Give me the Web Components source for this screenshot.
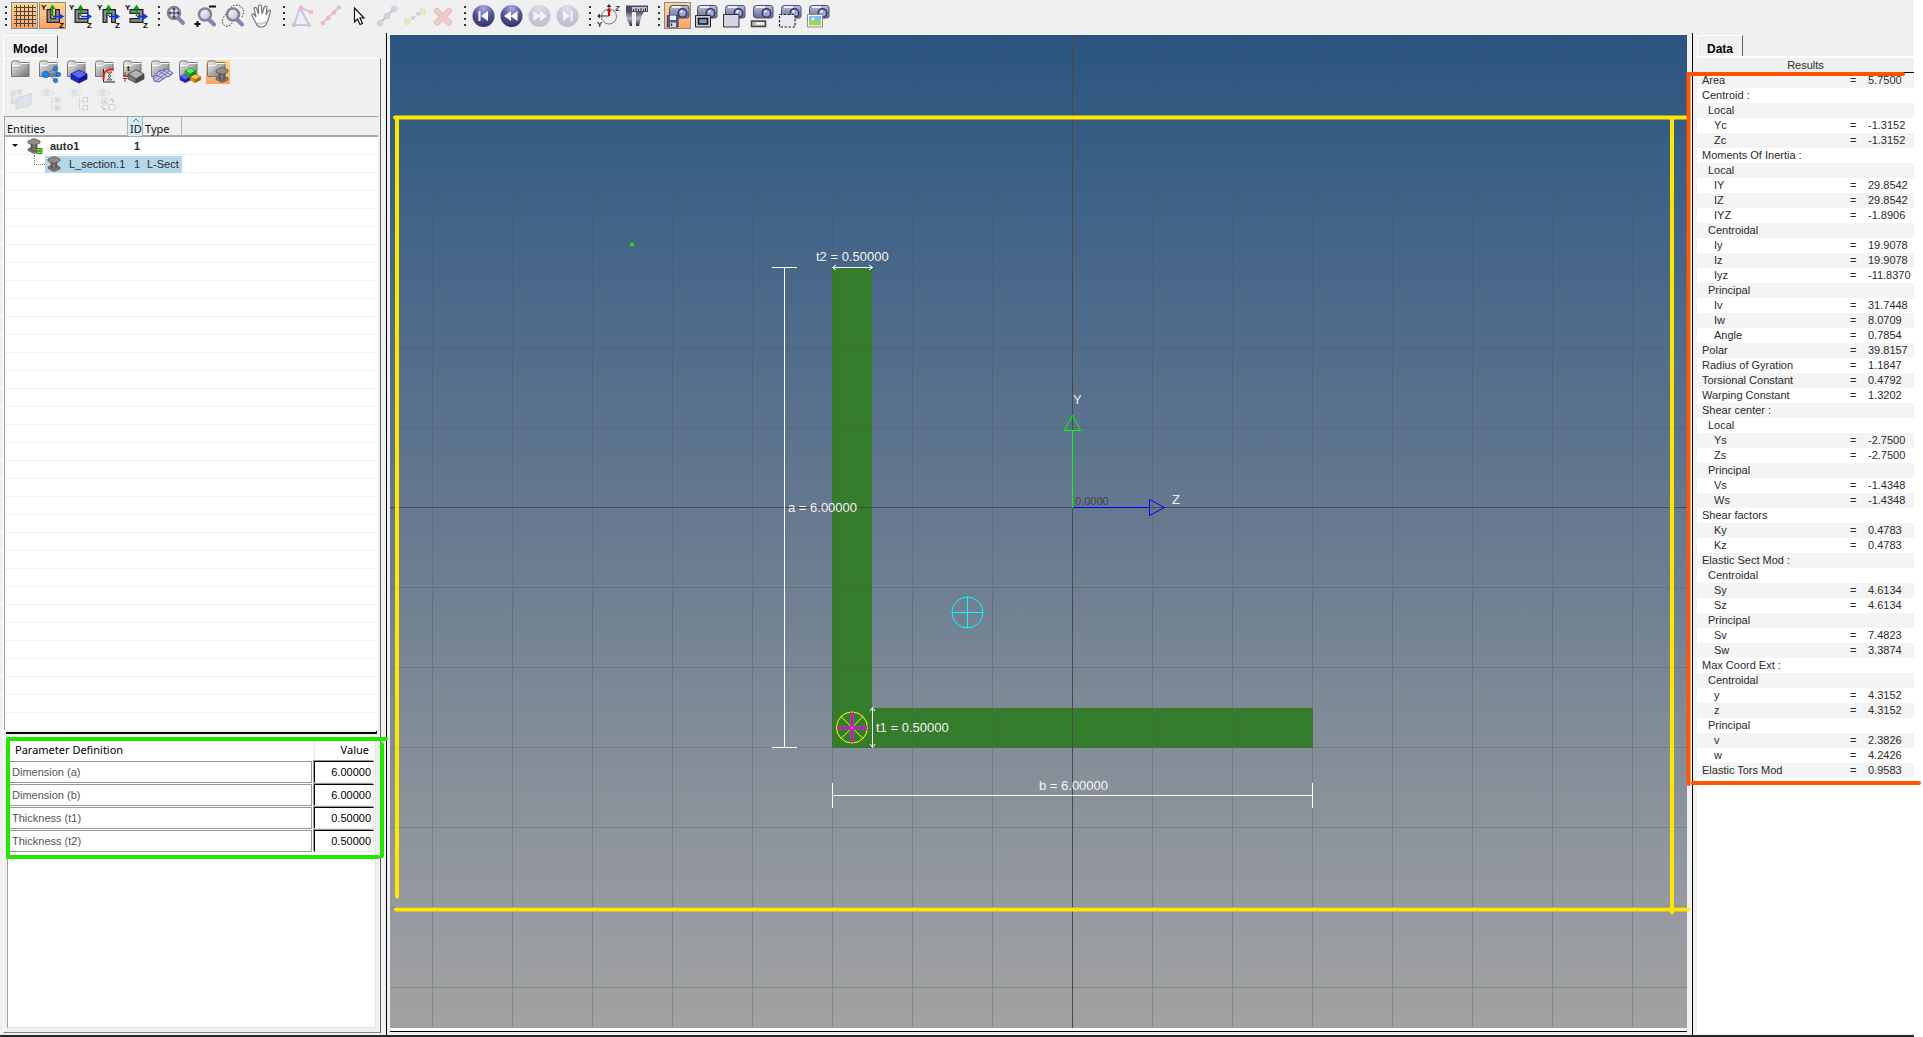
<!DOCTYPE html>
<html lang="en">
<head>
<meta charset="utf-8">
<title>Section editor</title>
<style>
html, body { height: 100%; }
body { margin: 0; background: #fff; font-family: "Liberation Sans", Arial, sans-serif; font-size: 11px; color: #2b2b2b; }
</style>
</head>
<body>
<section-app></section-app>
<script>
/* ---------- icon artwork ---------- */
const defs = `<defs>
<linearGradient id="fold" x1="0" y1="0" x2="1" y2="1"><stop offset="0" stop-color="#f2f2f2"/><stop offset="1" stop-color="#6f6f6f"/></linearGradient>
<radialGradient id="ball" cx=".5" cy=".15" r=".9"><stop offset="0" stop-color="#a9a9e6"/><stop offset=".5" stop-color="#54549c"/><stop offset="1" stop-color="#2c2c63"/></radialGradient>
<linearGradient id="cam" x1="0" y1="0" x2="0" y2="1"><stop offset="0" stop-color="#b9bddb"/><stop offset="1" stop-color="#666b94"/></linearGradient>
<linearGradient id="steel" x1="0" y1="0" x2="0" y2="1"><stop offset="0" stop-color="#4a4a62"/><stop offset=".5" stop-color="#b4b4c8"/><stop offset="1" stop-color="#2a2a3a"/></linearGradient>
<linearGradient id="lens" x1="0" y1="0" x2="1" y2="1"><stop offset="0" stop-color="#ffffff"/><stop offset="1" stop-color="#b3b9e6"/></linearGradient>
</defs>`;
const yz = p => `<path d="${p}" fill="none" stroke="#222" stroke-width="5" stroke-linecap="square"/><path d="${p}" fill="none" stroke="#8b8b8b" stroke-width="2.500" stroke-linecap="square"/>
<path d="M13.500 14V6" stroke="#009a00" stroke-width="1.500"/><path d="M10.500 7L13.500 2.500L16.500 7Z" fill="#00a800"/>
<path d="M14 14.500H21" stroke="#0030ff" stroke-width="1.500"/><path d="M20 11L25 14.500L20 18Z" fill="#0038ff"/>
<text x="2" y="8" font-size="8" font-weight="bold" fill="#000">Y</text><text x="20" y="26" font-size="8" font-weight="bold" fill="#000">Z</text>`;
const mag = (x, y) => `<path d="M${x+4} ${y+5}L${x+9} ${y+10}" stroke="#8486b8" stroke-width="4" stroke-linecap="round"/><circle cx="${x}" cy="${y}" r="6" fill="url(#lens)" stroke="#85858d" stroke-width="2.500"/>`;
const ballBtn = g => `<circle cx="13.500" cy="14" r="11" fill="url(#ball)"/><g fill="#fff">${g}</g>`;
const camera = `<path d="M10 3.500h6M5.500 6.500q0-3 3-3h14q2.500 0 2.500 2.500v8q0 2-2 2H8q-2.500 0-2.500-3z" fill="url(#cam)" stroke="#4c5075"/><path d="M8 5h9" stroke="#eef" stroke-width="2"/><circle cx="18.500" cy="11" r="5" fill="#343860"/><circle cx="18.500" cy="11" r="3.500" fill="#9aa0d6"/><circle cx="17.500" cy="9.500" r="1.200" fill="#fff"/>`;
const folder = `<path d="M1.500 3.500q0-2.500 2-2.500h5l2 1.500h8.500v14H1.500z" fill="url(#fold)" stroke="#767676"/><path d="M2 5.500h7l2-2h8" fill="none" stroke="#fff" stroke-width="1"/>`;
const cube = (x, y, s, t, l, r) => `<g transform="translate(${x} ${y}) scale(${s})" stroke="${r}" stroke-width=".8" stroke-linejoin="round"><path d="M0 4L8 0L16 4L8 9Z" fill="${t}"/><path d="M0 4L8 9V13L0 9Z" fill="${l}"/><path d="M16 4L8 9V13L16 9Z" fill="${r}"/></g>`;
const beam = (x, y) => `<g transform="translate(${x} ${y})" stroke="#514a4a" stroke-width=".7"><path d="M1 11L7 8.500L13 11V13L7 15.500L1 12.500Z" fill="#857b7a"/><path d="M4 5H10V12L7 13.500L4 12Z" fill="#6c6261"/><path d="M7 6V13" stroke="#a79f9d"/><path d="M1 3L7 .5L13 3V5L7 7.500L1 5Z" fill="#958b8a"/></g>`;
const eye = `<path d="M1 5Q8 -3 16 5Q8 11 1 5Z" fill="#eceef0" stroke="#b5b9bf"/><circle cx="8.500" cy="4.500" r="3" fill="#a9b8c6"/>`;
const ICONS = {
  grid: `<path d="M5.500 3V25M9.500 3V25M13.500 3V25M17.500 3V25M21.500 3V25M3 5.500H25M3 9.500H25M3 13.500H25M3 17.500H25M3 21.500H25" stroke="#4b443c"/>`,
  secU: yz('M10 9.500V18.500H18.500V9.500'),
  secC: yz('M19 9.500H10V18.500H19'),
  secN: yz('M10 18.500V9.500H18.500V18.500'),
  secD: yz('M9 9.500H18V18.500H9'),
  fit: mag(10, 11) + `<path d="M5.500 11H14.500M10 6.500V15.500" stroke="#222a40"/><path d="M10 5.500L12 7.500H8ZM10 16.500L8 14.500H12ZM4.500 11L6.500 9V13ZM15.500 11L13.500 9V13Z" fill="#222a40"/>`,
  zoom: mag(13, 12.500) + `<path d="M17 4.500H24M2.500 22H8.500M5.500 19V25" stroke="#111" stroke-width="2"/>`,
  zoomarea: `<path d="M9 8Q12 2 19 3.500Q26 7 22 15M6 12Q-1 20 5 24Q10 25 12 21" fill="none" stroke="#222" stroke-dasharray="1.500 1.500"/>` + mag(13, 12.500),
  hand: `<path d="M8.500 22L4 13.500Q3.500 11.500 5.500 12L8 15L6 6.500Q6.500 4.500 8.500 6L10.500 12L10.500 4Q12 2 13.500 4L14 12L16.500 4.500Q18 3.500 19 5L18 13L20.500 8.500Q22.500 8 22.500 9.500L20 18L18 22Q17 25 13 25Q9.500 25 8.500 22Z" fill="#fff" stroke="#77777c" stroke-width="1.200"/><path d="M9 21Q13 23 18 20" stroke="#c9c9cc" fill="none" stroke-width="2"/>`,
  poly: `<path d="M5 23L11 5.500L22 10M5 23H20L11 5.500" fill="none" stroke="#4a4ae0" stroke-width="2"/><g fill="#e02020"><circle cx="5" cy="23" r="2.300"/><circle cx="12" cy="5.500" r="2.300"/><circle cx="22" cy="10" r="2.300"/><circle cx="20" cy="23" r="2.300"/></g>`,
  line: `<path d="M6 21L22 5" stroke="#5a5ae0" stroke-width="2"/><g fill="#e02020"><circle cx="6" cy="21" r="2.300"/><circle cx="11.500" cy="16" r="2.300"/><circle cx="17" cy="10.500" r="2.300"/><circle cx="22" cy="5.500" r="2"/></g>`,
  cursor: `<path d="M9.500 6V20L12.500 17L15 22.500L17.500 21.500L15 16H19Z" fill="#fff" stroke="#111" stroke-width="1.200"/>`,
  nodes: `<path d="M7 21L21 7" stroke="#33336a" stroke-width="2"/><g fill="#7f7fae" stroke="#55558a" stroke-width=".5"><circle cx="7" cy="21" r="3"/><circle cx="14" cy="14" r="3"/><circle cx="21" cy="7" r="3"/></g>`,
  spread: `<path d="M11 17L18 11M11 14V17H14M15 11H18V14" fill="none" stroke="#333"/><g fill="#dcd42e" stroke="#aaa430" stroke-width=".5"><circle cx="6.500" cy="19.500" r="3.300"/><circle cx="21.500" cy="9.500" r="3.300"/></g>`,
  del: `<path d="M8 9L20 20.500M20 9L8 20.500" stroke="#d8281c" stroke-width="6" stroke-linecap="round"/><path d="M8 9L20 20.500M20 9L8 20.500" stroke="#ec6458" stroke-width="4" stroke-linecap="round"/>`,
  first: ballBtn('<path d="M8.500 9H10.500V19H8.500ZM11 14L18 9V19Z"/>'),
  back: ballBtn('<path d="M6 14L13 9V19ZM12.500 14L19.500 9V19Z"/>'),
  fwd: ballBtn('<path d="M21 14L14 9V19ZM14.500 14L7.500 9V19Z"/>'),
  last: ballBtn('<path d="M16.500 9H18.500V19H16.500ZM16 14L9 9V19Z"/>'),
  axes: `<circle cx="14" cy="14.500" r="7.500" fill="none" stroke="#73758a"/><path d="M14 14V3M14 14H3" stroke="#333"/><path d="M11.500 5L14 2L16.500 5ZM5 11.500L2 14L5 16.500Z" fill="#333"/><path d="M14 14V8" stroke="#e00" stroke-width="2"/><path d="M11.500 9.500L14 6L16.500 9.500Z" fill="#e00"/><text x="20" y="9" font-size="8" font-weight="bold" fill="#333">Z</text><text x="2" y="25" font-size="8" font-weight="bold" fill="#333">Y</text>`,
  caliper: `<path d="M3 3.500H25V10H3Z" fill="#4a4a62"/><path d="M9 5H24V9H9Z" fill="#c2c2d2"/><path d="M10.500 9V7M13 9V6M15.500 9V7M18 9V6M20.500 9V7M22.500 9V6" stroke="#333"/><path d="M3 9H9V24H7Q3 17 3 9ZM13 9H21Q20 12 18.500 14L16 24H13Z" fill="url(#steel)"/>`,
  cam1: camera + `<path d="M3.500 13.500H14V25H3.500Z" fill="#555a8e" stroke="#3b3f70"/><path d="M6 13.500H12V18H6Z" fill="#eee"/><path d="M6 20.500H12V25H6Z" fill="#ddd"/><path d="M7.500 21.500V24" stroke="#333" stroke-width="1.500"/>`,
  cam2: camera + `<path d="M3.500 13.500H18.500V25H3.500Z" fill="#c8cbd8" stroke="#222"/><path d="M6.500 16.500H15.500V22H6.500Z" fill="#8792d0" stroke="#111" stroke-width="1.500"/>`,
  cam3: camera + `<path d="M3.500 12.500H19V25H3.500Z" fill="#d3d6e2" stroke="#333"/>`,
  cam4: camera + `<path d="M3.500 19H17.500V24.500H3.500Z" fill="#bdbdc0" stroke="#444" stroke-width="1.500"/><path d="M8 21.500H16" stroke="#fff" stroke-width="2"/>`,
  cam5: camera + `<path d="M3.500 12.500H19V25H3.500Z" fill="#e9eaf0" stroke="#222" stroke-dasharray="2.500 1.500" stroke-width="1.200"/>`,
  cam6: camera + `<path d="M3.500 12.500H18.500V25H3.500Z" fill="#fff" stroke="#8a8a8a"/><path d="M5 14H17V20H5Z" fill="#7cc4f0"/><path d="M5 20L9 18L13 20L17 17.500V23.500H5Z" fill="#a6d64a"/><circle cx="9" cy="17" r="1.500" fill="#fff5a0"/>`,
  f1: folder,
  f2: folder + `<path d="M8 14L16 9M8 14L20 14.500M8 14L18 20" stroke="#1f6fd0" stroke-dasharray="2 1.500"/><g fill="#1c86e8" stroke="#0d58ac" stroke-width=".6"><circle cx="7.500" cy="14.500" r="3.300"/><circle cx="17.500" cy="8.500" r="2.200"/><circle cx="20.500" cy="14.500" r="2.200"/><circle cx="17.500" cy="20.500" r="2.200"/></g>`,
  f3: folder + cube(5, 10, 1, '#5a6cf4', '#1c2ccc', '#111a8c'),
  f4: folder + `<path d="M9 9H20.500V22H9Z" fill="#e6e6e6"/><path d="M9.500 9V22H21" stroke="#222" fill="none"/><path d="M9.500 20Q9 10.500 15 9.500H20" stroke="#f01818" stroke-width="2" fill="none"/><path d="M13 12H18L14 16L18 20H13L17 16Z" fill="#bbb" stroke="#444" stroke-width=".7"/>`,
  f5: folder + cube(6, 10, 1, '#b5b5b5', '#7d7d7d', '#4a4a4a') + `<text x="5" y="11" font-size="8" font-weight="bold" fill="#111">t</text><path d="M3 12V16M1 16H5M3 22V19M1 18.500H5" stroke="#c02020"/>`,
  f6: folder + `<path d="M3 18L9 11L17 9L23 13L20 16L16 17L9 22L4 21Z" fill="#c6c8e6" stroke="#5f63a8"/><path d="M6 15L14 19M9 11L17 16M13 10L21 15M6 21L19 11M4 19L15 10" stroke="#5f63a8" stroke-width=".8"/>`,
  f7: folder + cube(2, 14, .66, '#5a6cf4', '#1c2ccc', '#111a8c') + cube(12, 14, .66, '#ffc14a', '#e08a10', '#a86000') + cube(7, 8, .66, '#5cf05c', '#1cc01c', '#0f8c0f'),
  f8: folder + beam(9, 7),
  g1: `<path d="M1.500 4L11 1.500V13L1.500 15.500Z" fill="#b9bccb" stroke="#777b92"/><path d="M1.500 9.500L11 7M6 3V14" stroke="#fff"/><path d="M6 12Q10 8 12 9L21 5V16Q17 20 12 19L6 21Z" fill="#a3badb" stroke="#6985ad"/>`,
  g2: eye + `<path d="M13.500 9V21H17M13.500 13H17" fill="none" stroke="#9a9a9a"/><path d="M17 9.500H21.500V14H17ZM17 17.500H21.500V22H17Z" fill="#fff" stroke="#777"/><path d="M18 12h2M18 20h2" stroke="#2456c0" stroke-width="2"/>`,
  g3: eye + `<path d="M13.500 9V21H17M13.500 13H17" fill="none" stroke="#9a9a9a"/><path d="M17 9.500H21.500V14H17ZM17 17.500H21.500V22H17Z" fill="#fff" stroke="#777"/>`,
  g4: eye + `<path d="M8 10.500H13V16H8ZM15 16.500H21V22H15Z" fill="#fff" stroke="#777"/><path d="M9.500 13.500h2" stroke="#2456c0" stroke-width="2"/><path d="M16 11Q20 11 19 15M8 18Q8 22 12 21" fill="none" stroke="#555" stroke-width="1.500"/>`,
  auto: beam(1, 0) + `<path d="M10.500 10.500H16V15.500H10.500Z" fill="#7ee23a" stroke="#3d8a16"/><path d="M11 13H15.500" stroke="#2d6a10"/>`,
  sect: beam(1, 0)
};
const svg = (n, s) => `<svg width="${s}" height="${s}" viewBox="0 0 ${s} ${s}" aria-hidden="true">${defs}${ICONS[n]}</svg>`;

const define = (name, render) => customElements.define(name, class extends HTMLElement {
  connectedCallback() {
    if (this.shadowRoot) return;
    this.attachShadow({ mode: 'open' }).innerHTML = render(this);
  }
});

/* ---------- small parts ---------- */
define('icon-button', el => {
  const s = el.getAttribute('size') || '27';
  return `<style>
  :host { display: block; }
  button { display: block; box-sizing: border-box; width: ${s}px; height: ${s}px; margin: 0; padding: 0; border: 0; background: none; overflow: hidden; }
  svg { display: block; }
  :host([on]) button { background: linear-gradient(#ffd993, #ffa061); }
  :host([framed]) button { outline: 1px solid #8c8c8c; outline-offset: -1px; }
  :host([off]) svg { opacity: .25; }
  </style><button type="button" aria-label="${el.getAttribute('icon')}" ${el.hasAttribute('off') ? 'disabled' : ''}>${svg(el.getAttribute('icon'), s)}</button>`;
});

define('tool-group', () => `<style>
  :host { display: flex; align-items: center; }
  i { width: 2px; height: 20px; margin-right: 4px; background: repeating-linear-gradient(#333 0 2px, transparent 2px 6px); }
  div { display: flex; gap: 1px; padding-right: 1px; }
  </style><i></i><div><slot></slot></div>`);

define('tool-strip', () => {
  const b = (n, a = '') => `<icon-button icon="${n}" ${a}></icon-button>`;
  return `<style>
  :host { display: flex; gap: 7px; height: 27px; padding: 2px 0 4px 5px; background: #f0f0f0; }
  </style>
  <tool-group>${b('grid', 'on framed')}${b('secU', 'on framed')}${b('secC')}${b('secN')}${b('secD')}</tool-group>
  <tool-group>${b('fit')}${b('zoom')}${b('zoomarea')}${b('hand')}</tool-group>
  <tool-group>${b('poly', 'off')}${b('line', 'off')}${b('cursor')}${b('nodes', 'off')}${b('spread', 'off')}${b('del', 'off')}</tool-group>
  <tool-group>${b('first')}${b('back')}${b('fwd', 'off')}${b('last', 'off')}</tool-group>
  <tool-group>${b('axes')}${b('caliper')}</tool-group>
  <tool-group>${b('cam1', 'on framed')}${b('cam2')}${b('cam3')}${b('cam4')}${b('cam5')}${b('cam6')}</tool-group>`;
});

define('panel-tab', () => `<style>
  :host { display: flex; align-items: flex-end; box-sizing: border-box; width: fit-content; height: 23px; padding: 0 9px 2px; border: solid #fff; border-width: 1px 0 0 1px; border-right: 1px solid #606060; font-weight: bold; font-size: 12px; line-height: 14px; color: #000; }
  </style><slot></slot>`);

/* ---------- model tree ---------- */
define('model-tree', () => `<style>
  :host { display: block; box-sizing: border-box; border: solid #a0a0a0; border-width: 1px 0 0 1px; background: repeating-linear-gradient(#fff 0 17px, #e6f4fa 17px 18px) 0 20px no-repeat, #fff; overflow: hidden; }
  .wrap { background: linear-gradient(#f0f0f0 18px, #a0a8b0 18px) 0 0 / 100% 20px no-repeat; }
  table { border-collapse: separate; border-spacing: 0; table-layout: fixed; width: 177px; }
  th, td { padding: 0; text-align: left; white-space: nowrap; }
  th { height: 20px; box-sizing: border-box; border-bottom: 1px solid #a0a8b0; border-right: 1px solid #a8b4be; font: 11px/14px "Noto Sans", sans-serif; color: #111; padding: 5px 0 0 2px; }
  .sort { background: #d9ebf7; position: relative; }
  .sort svg { position: absolute; left: 4px; top: 1px; }
  td { height: 18px; }
  .c { display: flex; align-items: center; height: 17px; }
  .root { font-weight: bold; }
  .root .c { padding-left: 7px; }
  .root svg + svg { margin: 0 7px 0 8px; }
  .root td + td .c, .sel td + td .c { margin-left: 0; padding-left: 6px; }
  .sel .c { margin-left: 40px; background: #b5d7ea; gap: 7px; }
  .sel td + td + td .c { padding-left: 4px; }
  .sel .c svg { margin-left: 1px; }
  .link { position: absolute; width: 10px; height: 9px; margin-left: -11px; margin-top: -8px; border: dotted #777; border-width: 0 0 1px 1px; }
  </style>
  <div class="wrap"><table>
  <colgroup><col style="width:123px"><col style="width:15px"><col style="width:39px"></colgroup>
  <thead><tr><th>Entities</th><th class="sort"><svg width="8" height="4"><path d="M1 4L4 1L7 4" fill="none" stroke="#3c7fb1"/></svg>ID</th><th>Type</th></tr></thead>
  <tbody>
  <tr class="root"><td><div class="c"><svg width="6" height="4"><path d="M0 0H6L3 3Z" fill="#111"/></svg>${svg('auto', 17)}auto1</div></td><td><div class="c">1</div></td><td></td></tr>
  <tr class="sel"><td><div class="c"><span class="link"></span>${svg('sect', 16)}L_section.1</div></td><td><div class="c">1</div></td><td><div class="c">L-Sect</div></td></tr>
  </tbody></table></div>`);

/* ---------- parameter table ---------- */
define('param-table', () => {
  const rows = [['Dimension (a)', '6.00000'], ['Dimension (b)', '6.00000'], ['Thickness (t1)', '0.50000'], ['Thickness (t2)', '0.50000']];
  return `<style>
  :host { display: block; box-sizing: border-box; position: relative; border: 1px solid #e3e3e3; border-left-color: #a0a0a0; background: #fff; }
  table { width: 100%; border-collapse: separate; border-spacing: 0; table-layout: fixed; padding: 0 1px 0 2px; }
  col + col { width: 60px; }
  th { height: 23px; padding: 2px 5px 0; text-align: left; font: 11px/18px "Noto Sans", sans-serif; color: #000; box-sizing: border-box; }
  th + th { text-align: right; border-left: 1px solid #e8e8e8; }
  td { padding: 0; height: 23px; }
  label { display: block; box-sizing: border-box; height: 22px; margin-right: 2px; padding-left: 2px; border: 1px solid #999; border-left: 0; line-height: 21px; color: #555; }
  input { display: block; box-sizing: border-box; width: 60px; height: 22px; margin: 0; padding: 0 2px; border: 1px solid #e8e8e8; border-top-color: #000; border-left-color: #000; outline: 0; border-radius: 0; background: #fff; text-align: right; font: 11px "Liberation Sans", sans-serif; color: #000; box-shadow: -1px -1px #999; }
  .mark { position: absolute; left: -2px; top: 0; overflow: visible; pointer-events: none; }
  </style>
  <table><colgroup><col><col></colgroup><thead><tr><th>Parameter Definition</th><th>Value</th></tr></thead><tbody>
  ${rows.map((r, i) => `<tr><td><label for="p${i}">${r[0]}</label></td><td><input id="p${i}" value="${r[1]}"></td></tr>`).join('')}
  </tbody></table>
  <svg class="mark" width="380" height="122"><path d="M2 1H380M2 2V118M376 6V118M2 119H372" fill="none" stroke="#22e800" stroke-width="4" stroke-linecap="round"/></svg>`;
});

define('model-panel', () => {
  const b = (n, a = '') => `<icon-button size="24" icon="${n}" ${a}></icon-button>`;
  return `<style>
  :host { display: flex; flex-direction: column; box-sizing: border-box; width: 386px; padding: 2px 5px 2px 3px; background: #f0f0f0; }
  .body { flex: 1; display: flex; flex-direction: column; min-height: 0; border: 1px solid #fff; border-right-color: #606060; border-bottom-color: #888; padding-top: 1px; }
  .icons { display: flex; gap: 4px; padding: 0 6px; height: 24px; margin-bottom: 4px; }
  model-tree { flex: 617 1 0; margin-right: 2px; }
  hr { flex: none; height: 1px; margin: 1px 3px 3px 2px; border: solid #000; border-width: 0 1px 2px 0; }
  param-table { flex: 291 1 0; margin: 0 4px 4px 3px; }
  </style>
  <panel-tab>Model</panel-tab>
  <div class="body">
    <div class="icons">${b('f1')}${b('f2')}${b('f3')}${b('f4')}${b('f5')}${b('f6')}${b('f7')}${b('f8', 'on')}</div>
    <div class="icons">${b('g1', 'off')}${b('g2', 'off')}${b('g3', 'off')}${b('g4', 'off')}</div>
    <model-tree></model-tree><hr><param-table></param-table>
  </div>`;
});

/* ---------- section drawing ---------- */
define('section-view', () => {
  let grid = '';
  for (let x = 432; x < 1687; x += 80) if (x !== 1072) grid += `M${x}.5 35V1028`;
  for (let y = 107; y < 1028; y += 80) if (y !== 507) grid += `M390 ${y}.5H1687`;
  return `<style>
  :host { display: flex; flex-direction: column; box-sizing: border-box; min-width: 0; padding: 2px 5px 0 3px; border-left: 1px solid #000; background: #f0f0f0; }
  svg { flex: 1; display: block; width: 100%; min-height: 0; overflow: visible; background: linear-gradient(#2b557f, #436588 20%, #65788f 47.500%, #838e98 72%, #9498a0 86%, #a1a2a1); font: 13px "Liberation Sans", sans-serif; }
  .crisp { shape-rendering: crispEdges; }
  .base { height: 3px; margin-bottom: 3px; background: #fff; border-bottom: 1px solid #000; }
  </style>
  <svg viewBox="390 35 1297 993" preserveAspectRatio="xMidYMid slice">
  <path d="M832 267.500H872V708H1313V748H832Z" fill="#357c2c" class="crisp"/>
  <path d="${grid}" stroke="#4a5458" stroke-opacity=".32" class="crisp"/>
  <path d="M1072.500 35V1028M390 507.500H1687" stroke="#4a4a4a" class="crisp"/>
  <path d="M784.500 267V747M772 267.500H797M772 747.500H797M832.500 783V808M1312.500 783V808M832 795.500H1313M832 267.500H873M872.500 708V747" stroke="#fff" class="crisp"/>
  <path d="M836 265L832.500 267.500L836 270M869 265L872.500 267.500L869 270M870 711L872.500 707.500L875 711M870 744L872.500 747.500L875 744" fill="none" stroke="#fff"/>
  <path d="M1072.500 508V431M1064.500 430.500L1072.500 415.500L1080.500 430.500Z" fill="none" stroke="#0f0"/>
  <path d="M1073 507.500H1149M1149.500 499.500V515.500L1164.500 507.500Z" fill="none" stroke="#00f"/>
  <g fill="none" stroke="#0ff"><circle cx="967.500" cy="612.500" r="15.500"/><path d="M952 612.500H983M967.500 597V628"/></g>
  <g fill="none" stroke="#ff0"><circle cx="852" cy="727.500" r="15.500"/><path d="M841 716.500L863 738.500M863 716.500L841 738.500"/></g>
  <path d="M836.500 726.500H867.500M836.500 729.500H867.500M850.500 712V743M853.500 712V743" stroke="#f0f" class="crisp"/>
  <g fill="#f4f4f4"><text x="816" y="261">t2 = 0.50000</text><text x="788" y="512">a = 6.00000</text><text x="876" y="732">t1 = 0.50000</text><text x="1039" y="790">b = 6.00000</text>
  <text x="1073" y="404">Y</text><text x="1172" y="504">Z</text></g>
  <text x="1075" y="505" font-size="11" fill="#444">0.0000</text>
  <circle cx="632" cy="244.500" r="2" fill="#22e800"/>
  <path d="M395 117.500H1689M397 119V896.500M396 909.500H1688M1672 119V912.500" fill="none" stroke="#ffe600" stroke-width="4" stroke-linecap="round"/>
  </svg><div class="base"></div>`;
});

/* ---------- results ---------- */
define('result-list', () => {
  const rows = `0|Area|5.7500
0|Centroid :
1|Local
2|Yc|-1.3152
2|Zc|-1.3152
0|Moments Of Inertia :
1|Local
2|IY|29.8542
2|IZ|29.8542
2|IYZ|-1.8906
1|Centroidal
2|Iy|19.9078
2|Iz|19.9078
2|Iyz|-11.8370
1|Principal
2|Iv|31.7448
2|Iw|8.0709
2|Angle|0.7854
0|Polar|39.8157
0|Radius of Gyration|1.1847
0|Torsional Constant|0.4792
0|Warping Constant|1.3202
0|Shear center :
1|Local
2|Ys|-2.7500
2|Zs|-2.7500
1|Principal
2|Vs|-1.4348
2|Ws|-1.4348
0|Shear factors
2|Ky|0.4783
2|Kz|0.4783
0|Elastic Sect Mod :
1|Centroidal
2|Sy|4.6134
2|Sz|4.6134
1|Principal
2|Sv|7.4823
2|Sw|3.3874
0|Max Coord Ext :
1|Centroidal
2|y|4.3152
2|z|4.3152
1|Principal
2|v|2.3826
2|w|4.2426
0|Elastic Tors Mod|0.9583`.split('\n').map(r => r.split('|'));
  return `<style>
  :host { display: block; background: #fff; }
  table { width: 100%; border-collapse: collapse; table-layout: fixed; }
  th, td { padding: 0; font-weight: normal; text-align: left; white-space: nowrap; }
  thead th { height: 14px; line-height: 14px; text-align: center; background: #f0f0f0; border-bottom: 1px solid #000; }
  tbody tr { height: 15px; line-height: 15px; }
  tbody tr:nth-child(odd) { background: #f4f4f4; }
  .l0 { padding-left: 5px; } .l1 { padding-left: 11px; } .l2 { padding-left: 17px; }
  </style>
  <table><colgroup><col><col style="width:18px"><col style="width:46px"></colgroup>
  <thead><tr><th colspan="3">Results</th></tr></thead>
  <tbody>${rows.map(r => `<tr><th class="l${r[0]}" scope="row">${r[1]}</th><td>${r[2] ? '=' : ''}</td><td>${r[2] || ''}</td></tr>`).join('')}</tbody></table>`;
});

define('data-panel', () => `<style>
  :host { display: flex; flex-direction: column; box-sizing: border-box; position: relative; width: 222px; border-left: 1px solid #000; padding: 2px 0 1px 4px; background: #f0f0f0; }
  result-list { flex: 1; border-top: 2px solid #fff; }
  panel-tab { height: 21px; padding-bottom: 0; }
  .mark { position: absolute; left: -6px; top: 39px; overflow: visible; pointer-events: none; }
  </style>
  <panel-tab>Data</panel-tab><result-list></result-list>
  <svg class="mark" width="234" height="714"><path d="M2 2H216M1.500 2V712M6 711H232" fill="none" stroke="#ff5500" stroke-width="4" stroke-linecap="round"/></svg>`);

define('section-app', () => `<style>
  :host { display: flex; flex-direction: column; box-sizing: border-box; min-height: 100vh; padding-right: 9px; }
  main { flex: 1; display: flex; background: #f0f0f0; }
  model-panel, data-panel { flex: none; }
  section-view { flex: 1; }
  data-panel { z-index: 1; }
  footer { height: 2px; background: #24282c; }
  </style>
  <tool-strip></tool-strip>
  <main><model-panel></model-panel><section-view></section-view><data-panel></data-panel></main>
  <footer></footer>`);
</script>
</body>
</html>
